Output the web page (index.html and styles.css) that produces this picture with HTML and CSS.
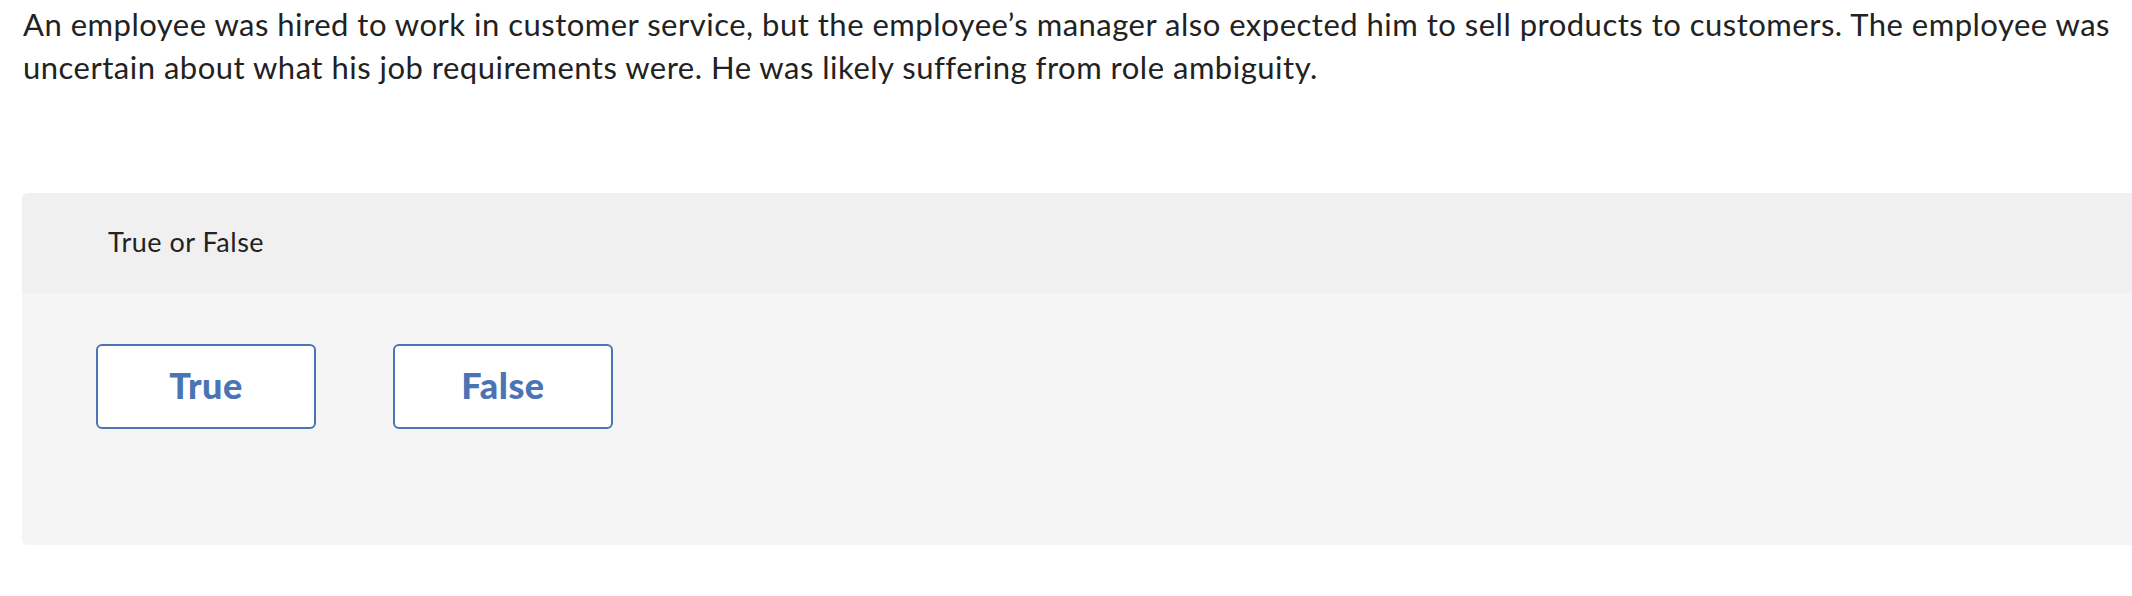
FILE: index.html
```html
<!DOCTYPE html>
<html lang="en">
<head>
<meta charset="utf-8">
<title>True or False</title>
<link rel="stylesheet" href="styles.css">
</head>
<body>
<div class="question">
  <p class="prompt">An employee was hired to work in customer service, but the employee’s manager also expected him to sell products to customers. The employee was uncertain about what his job requirements were. He was likely suffering from role ambiguity.</p>
</div>
<section class="panel">
  <div class="panel-header">True or False</div>
  <div class="panel-body">
    <button class="choice" type="button">True</button>
    <button class="choice" type="button">False</button>
  </div>
</section>
</body>
</html>
```
FILE: styles.css
```css
html, body {
  margin: 0;
  padding: 0;
  background: #ffffff;
  overflow: hidden;
}

body {
  font-family: Lato, "Liberation Sans", sans-serif;
  color: #222222;
}

.question {
  padding: 3px 0 0 23px;
}

.prompt {
  margin: 0;
  font-size: 31px;
  letter-spacing: 0.5px;
  line-height: 43px;
  color: #222222;
}

.panel {
  margin: 104px 0 0 22px;
  border-radius: 6px 0 0 6px;
  overflow: hidden;
  background: #f5f5f5;
}

.panel-header {
  height: 100px;
  line-height: 98px;
  padding-left: 86px;
  background: #f0f0f0;
  font-size: 27px;
  letter-spacing: 0.5px;
  color: #222222;
}

.panel-body {
  display: flex;
  gap: 77px;
  padding: 51px 0 116px 74px;
  background: #f5f5f5;
}

.choice {
  box-sizing: border-box;
  width: 220px;
  height: 85px;
  border: 2px solid #4a74b4;
  border-radius: 6px;
  background: #ffffff;
  color: #4a74b4;
  font-family: Lato, "Liberation Sans", sans-serif;
  font-weight: 900;
  font-size: 36px;
  letter-spacing: 0.5px;
  padding: 0 0 3px 0;
  cursor: pointer;
}
```
